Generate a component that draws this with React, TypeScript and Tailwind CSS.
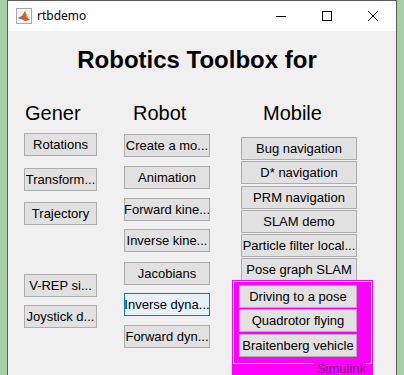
import React from "react";

type Item = { label: string; mt: string; focus?: boolean };

const GERAL: Item[] = [
  { label: "Rotations", mt: "mt-[10px]" },
  { label: "Transform...", mt: "mt-[12px]" },
  { label: "Trajectory", mt: "mt-[11px]" },
  { label: "V-REP si...", mt: "mt-[49px]" },
  { label: "Joystick d...", mt: "mt-[8px]" },
];

const ROBOT: Item[] = [
  { label: "Create a mo...", mt: "mt-[11px]" },
  { label: "Animation", mt: "mt-[9px]" },
  { label: "Forward kine...", mt: "mt-[9px]" },
  { label: "Inverse kine...", mt: "mt-[8px]" },
  { label: "Jacobians", mt: "mt-[10px]" },
  { label: "Inverse dyna...", mt: "mt-[8px]", focus: true },
  { label: "Forward dyn...", mt: "mt-[9px]" },
];

const MOBILE: Item[] = [
  { label: "Bug navigation", mt: "mt-[14px]" },
  { label: "D* navigation", mt: "mt-[1px]" },
  { label: "PRM navigation", mt: "mt-[2px]" },
  { label: "SLAM demo", mt: "mt-[1px]" },
  { label: "Particle filter local...", mt: "mt-[1px]" },
  { label: "Pose graph SLAM", mt: "mt-[1px]" },
];

const SIMULINK: Item[] = [
  { label: "Driving to a pose", mt: "mt-[3px]" },
  { label: "Quadrotor flying", mt: "mt-[1px]" },
  { label: "Braitenberg vehicle", mt: "mt-[2px]" },
];

function Botao({ item, largura }: { item: Item; largura: string }) {
  return (
    <div
      className={`flex h-[23px] shrink-0 items-center justify-center overflow-hidden whitespace-nowrap border text-[13px] leading-none text-black ${largura} ${item.mt} ${
        item.focus ? "border-[#0078d7] bg-[#e5f1fb]" : "border-[#adadad] bg-[#e1e1e1]"
      }`}
    >
      {item.label}
    </div>
  );
}

function MatlabIcon() {
  return (
    <svg width="16" height="16" viewBox="0 0 16 16">
      <rect x="0.5" y="0.5" width="15" height="15" fill="#f4f4f4" stroke="#a9a9a9" />
      <path d="M2 10 L6 8 L9 3 L12 10 L14 12 L9 13 L5 11 Z" fill="#d9572a" />
      <path d="M2 10 L6 8 L7 11 L5 11 Z" fill="#4f7fb8" />
      <path d="M9 3 L12 10 L10 9 Z" fill="#f2a33a" />
    </svg>
  );
}

function BarraTitulo() {
  return (
    <div className="flex h-[30px] shrink-0 items-center bg-white">
      <div className="ml-[8px]">
        <MatlabIcon />
      </div>
      <span className="ml-[5px] font-['Noto_Sans',sans-serif] text-[12px] leading-none text-black">
        rtbdemo
      </span>
      <div className="ml-auto flex h-full">
        <div className="flex w-[46px] items-center justify-center">
          <svg width="10" height="10" viewBox="0 0 10 10">
            <line x1="0" y1="5.5" x2="10" y2="5.5" stroke="#000" strokeWidth="1" />
          </svg>
        </div>
        <div className="flex w-[46px] items-center justify-center">
          <svg width="10" height="10" viewBox="0 0 10 10">
            <rect x="0.5" y="0.5" width="9" height="9" fill="none" stroke="#000" strokeWidth="1" />
          </svg>
        </div>
        <div className="flex w-[46px] items-center justify-center">
          <svg width="10" height="10" viewBox="0 0 10 10">
            <path d="M0 0 L10 10 M10 0 L0 10" stroke="#000" strokeWidth="1" />
          </svg>
        </div>
      </div>
    </div>
  );
}

export default function App() {
  return (
    <div className="flex h-[375px] w-[404px] overflow-hidden bg-[#a8cfa8] font-['Liberation_Sans',Arial,sans-serif]">
      <div className="w-[7px] shrink-0" />
      <div className="flex w-[390px] shrink-0 flex-col border-x border-t border-[#5c5c5c]">
        <BarraTitulo />
        <div className="flex flex-1 flex-col bg-[#f0f0f0]">
          <h1 className="mt-[18px] h-[22px] pr-[10px] text-center text-[24px] font-bold leading-[22px] text-black">
            Robotics Toolbox for
          </h1>

          <div className="mt-[32px] flex flex-1">
            <div className="ml-[16px] flex w-[73px] flex-col">
              <div className="h-[20px] pl-[1px] text-[20px] leading-[20px]">Gener</div>
              {GERAL.map((b) => (
                <Botao key={b.label} item={b} largura="w-[73px]" />
              ))}
            </div>

            <div className="ml-[27px] flex w-[86px] flex-col">
              <div className="h-[20px] pl-[9px] text-[20px] leading-[20px]">Robot</div>
              {ROBOT.map((b) => (
                <Botao key={b.label} item={b} largura="w-[86px]" />
              ))}
            </div>

            <div className="ml-[31px] flex w-[116px] flex-col">
              <div className="h-[20px] pl-[22px] text-[20px] leading-[20px]">Mobile</div>
              {MOBILE.map((b) => (
                <Botao key={b.label} item={b} largura="w-[116px]" />
              ))}

              {/* painel Simulink, título em baixo à direita */}
              <div className="relative ml-[-9px] mt-[-1px] w-[141px] flex-1 bg-[#ff00ff] px-[1px] pt-[1px]">
                <div className="flex flex-col border border-white pb-[6px] pl-[5px]">
                  {SIMULINK.map((b) => (
                    <Botao key={b.label} item={b} largura="w-[118px]" />
                  ))}
                </div>
                <span className="absolute right-[7px] top-[81px] bg-[#ff00ff] pl-[4px] text-[13px] leading-[15px] text-[#800a80]">
                  Simulink
                </span>
              </div>
            </div>
          </div>
        </div>
      </div>
    </div>
  );
}
